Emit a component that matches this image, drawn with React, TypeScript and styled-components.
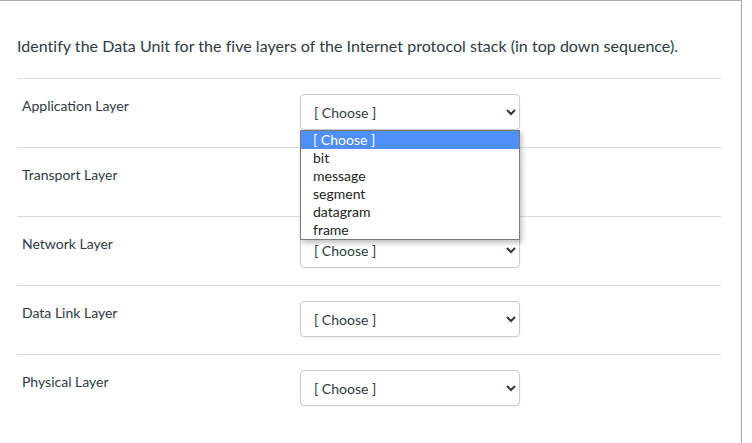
import React from "react";
import styled, { createGlobalStyle } from "styled-components";

const Global = createGlobalStyle`
  html, body { margin: 0; padding: 0; background: #fff; }
  body { font-family: Lato, "Noto Sans", sans-serif; color: #2d3b45; }
`;

const Frame = styled.div`
  width: 742px;
  min-height: 443px;
  box-sizing: border-box;
  border-top: 1px solid #a9a9a9;
  border-right: 1px solid #a9a9a9;
  padding: 0 20px 0 17px;
`;

const Question = styled.p`
  margin: 0;
  padding: 35px 0 22px 0;
  font-size: 16px;
  line-height: 20px;
  letter-spacing: 0.03px;
  border-bottom: 1px solid #dcdcdc;
`;

const Row = styled.div<{ $last?: boolean }>`
  display: flex;
  align-items: flex-start;
  padding: 15px 0 17px 5px;
  border-bottom: ${(p) => (p.$last ? "none" : "1px solid #dcdcdc")};
`;

const Label = styled.div`
  width: 278px;
  flex: none;
  font-size: 14px;
  line-height: 18px;
  margin-top: 3px;
`;

const SelectWrap = styled.div`
  position: relative;
  width: 220px;
`;

const Select = styled.select`
  width: 220px;
  height: 36px;
  box-sizing: border-box;
  border: 1px solid #c7cdd1;
  border-radius: 4px;
  background: #fff;
  padding: 0 8px 0 9px;
  font-family: Lato, "Noto Sans", sans-serif;
  font-size: 14px;
  color: #2d3b45;
  box-shadow: 0 1px 2px rgba(0, 0, 0, 0.06);
`;

const List = styled.div`
  position: absolute;
  top: 36px;
  left: 0;
  width: 220px;
  box-sizing: border-box;
  border: 1px solid #7a7a7a;
  background: #fff;
  box-shadow: 2px 3px 5px rgba(0, 0, 0, 0.25);
  z-index: 5;
`;

const Option = styled.div<{ $active?: boolean }>`
  height: 18px;
  line-height: 18px;
  padding-left: 12px;
  font-size: 14px;
  color: ${(p) => (p.$active ? "#fff" : "#222")};
  background: ${(p) => (p.$active ? "#4d8ff7" : "transparent")};
`;

const layers = [
  "Application Layer",
  "Transport Layer",
  "Network Layer",
  "Data Link Layer",
  "Physical Layer",
];

const options = ["[ Choose ]", "bit", "message", "segment", "datagram", "frame"];

export default function App() {
  return (
    <>
      <Global />
      <Frame>
        <Question>
          Identify the Data Unit for the five layers of the Internet protocol stack (in top down sequence).
        </Question>
        {layers.map((l, i) => (
          <Row key={l} $last={i === layers.length - 1}>
            <Label>{l}</Label>
            <SelectWrap>
              <Select defaultValue="">
                {options.map((o, j) => (
                  <option key={o} value={j === 0 ? "" : o}>
                    {o}
                  </option>
                ))}
              </Select>
              {i === 0 && (
                <List>
                  {options.map((o, j) => (
                    <Option key={o} $active={j === 0}>
                      {o}
                    </Option>
                  ))}
                </List>
              )}
            </SelectWrap>
          </Row>
        ))}
      </Frame>
    </>
  );
}
